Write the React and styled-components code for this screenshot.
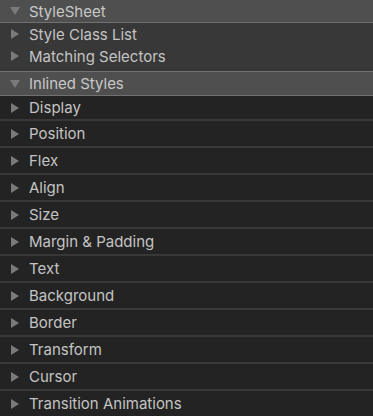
import React from 'react'
import styled, { createGlobalStyle } from 'styled-components'

const Global = createGlobalStyle`
  html, body { margin: 0; padding: 0; background: #232323; }
  body { font-family: Inter, "Noto Sans", sans-serif; overflow: hidden; }
`;

const Panel = styled.div`
  width: 373px;
  height: 416px;
  overflow: hidden;
  display: flex;
  flex-direction: column;
  background: #383838;
`;

const Header = styled.div`
  height: ${p => p.h}px;
  flex: none;
  display: flex;
  align-items: center;
  gap: 9px;
  padding-left: 10px;
  background: #4f4f4f;
  border-bottom: 1px solid #717171;
  border-top: ${p => (p.top ? '1px solid #717171' : 'none')};
  color: #c8c8c8;
  font-size: 15px;
`;

const SubList = styled.div`
  display: flex;
  flex-direction: column;
  padding-bottom: 4px;
  background: #383838;
`;

const SubRow = styled.div`
  height: 22px;
  display: flex;
  align-items: center;
  gap: 9px;
  padding-left: 10px;
  color: #c4c4c4;
  font-size: 15px;
`;

const List = styled.div`
  display: flex;
  flex-direction: column;
  gap: 2px;
  background: #383838;
`;

const Row = styled.div`
  height: ${p => (p.first ? 23 : 25)}px;
  flex: none;
  display: flex;
  align-items: center;
  gap: 9px;
  padding-left: 10px;
  background: #232323;
  color: #c4c4c4;
  font-size: 15px;
`;

const Arrow = styled.svg`
  width: 10px;
  height: 10px;
  flex: none;
  fill: #7a7a7a;
`;

const Caret = ({ open }) => (
  <Arrow viewBox="0 0 10 10">
    {open ? <polygon points="0,1 10,1 5,9" /> : <polygon points="1,0 9,5 1,10" />}
  </Arrow>
);

const props = ['Display', 'Position', 'Flex', 'Align', 'Size', 'Margin & Padding', 'Text',
  'Background', 'Border', 'Transform', 'Cursor', 'Transition Animations'];

export default function App() {
  return (
    <Panel>
      <Global />
      <Header h={22}><Caret open />StyleSheet</Header>
      <SubList>
        <SubRow><Caret />Style Class List</SubRow>
        <SubRow><Caret />Matching Selectors</SubRow>
      </SubList>
      <Header h={23} top><Caret open />Inlined Styles</Header>
      <List>
        {props.map((p, i) => <Row key={p} first={i === 0}><Caret />{p}</Row>)}
      </List>
    </Panel>
  );
}
